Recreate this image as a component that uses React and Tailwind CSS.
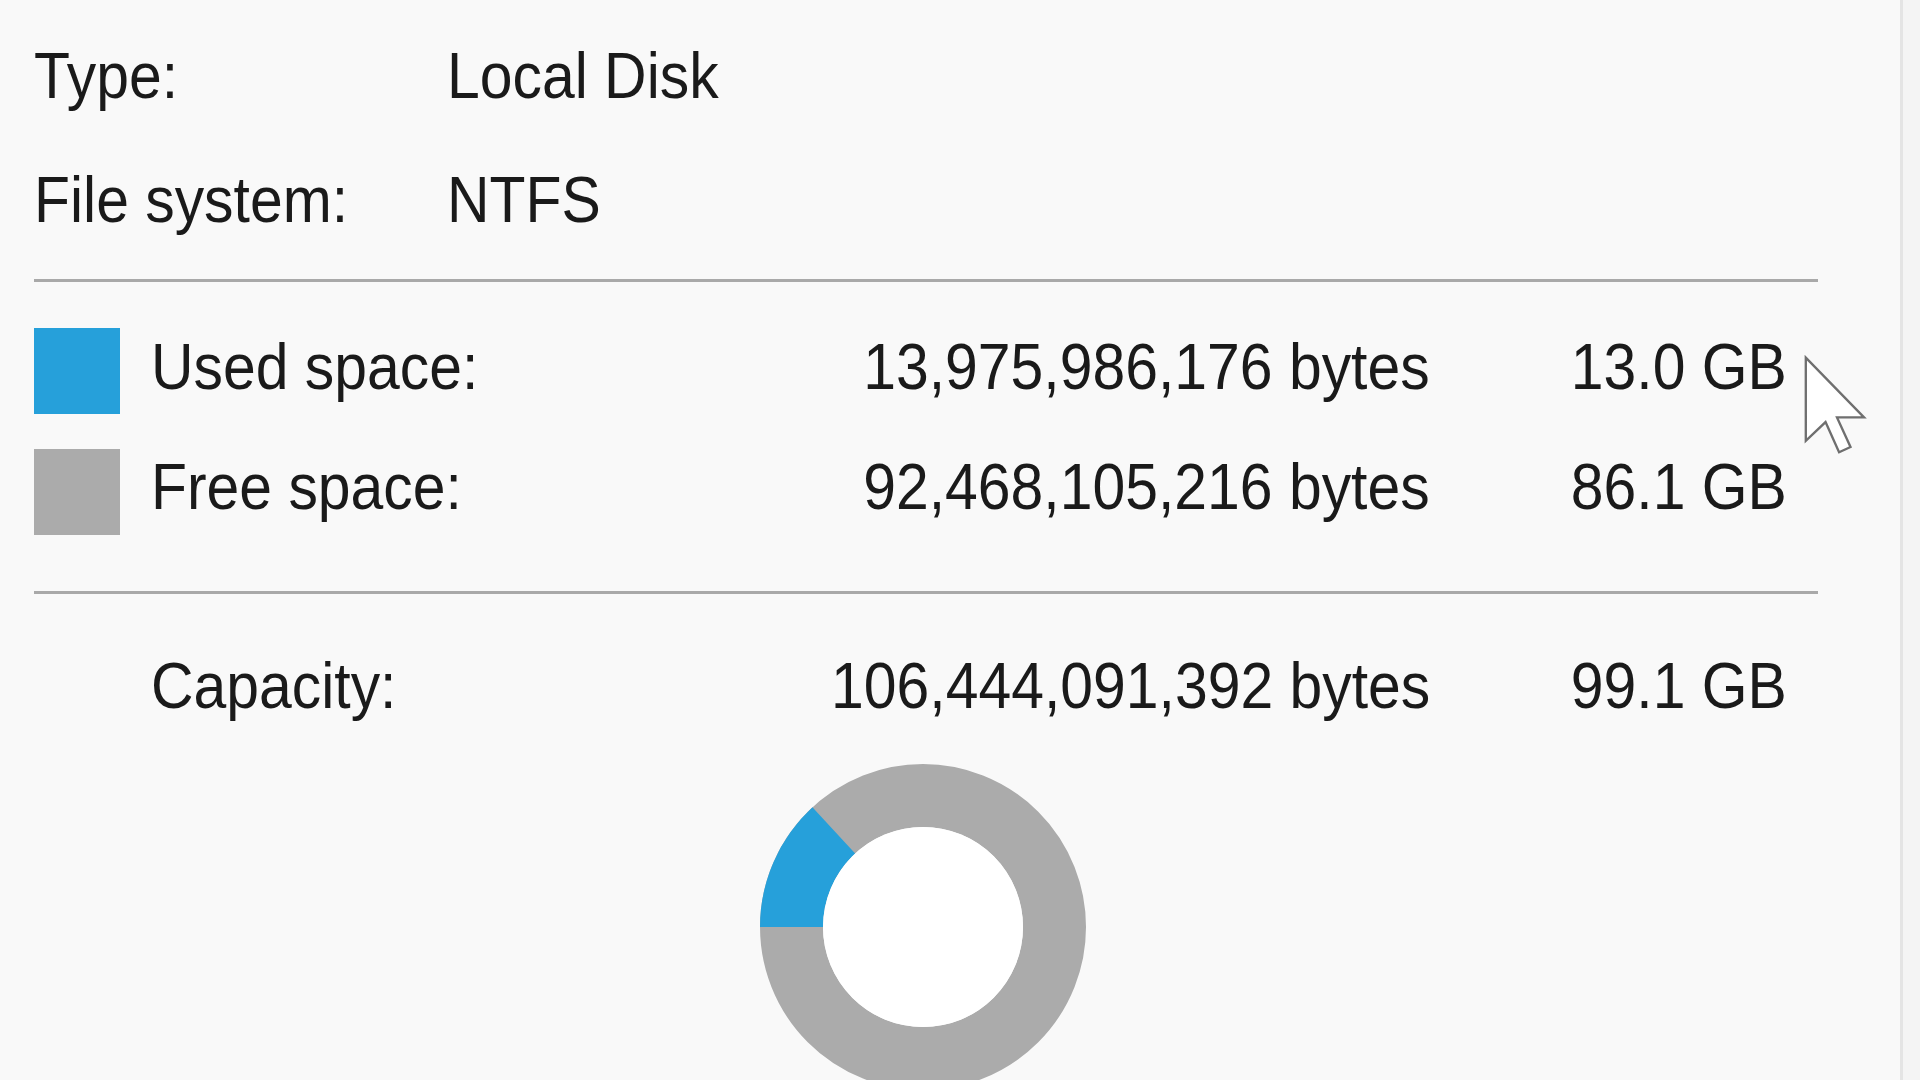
import React from "react";

function T({ children, right }) {
  return (
    <span
      className={`inline-block whitespace-nowrap scale-x-[0.92] ${right ? "origin-right" : "origin-left"}`}
    >
      {children}
    </span>
  );
}

function Row({ swatch, label, bytes, gb, textTop }) {
  return (
    <div className="flex items-start h-[86px] shrink-0">
      {swatch ? (
        <div className={`w-[86px] h-[86px] shrink-0 ${swatch}`} />
      ) : (
        <div className="w-[86px] h-[86px] shrink-0" />
      )}
      <div className={`ml-[31px] w-[1279px] flex justify-between h-[64px] leading-none ${textTop}`}>
        <T>{label}</T>
        <T right>{bytes}</T>
      </div>
      <div className={`w-[357px] text-right h-[64px] leading-none ${textTop}`}>
        <T right>{gb}</T>
      </div>
    </div>
  );
}

export default function App() {
  const r = 131.5;
  const c = 2 * Math.PI * r;
  const used = 13975986176 / 106444091392;
  return (
    <div
      className="relative w-full h-[1080px] overflow-hidden flex bg-[#f9f9f9] text-[#1a1a1a] text-[64px]"
      style={{ fontFamily: '"Liberation Sans", Arial, sans-serif' }}
    >
      <div className="w-[1900px] shrink-0 pl-[34px] flex flex-col">
        <div className="mt-[44px] h-[64px] shrink-0 flex leading-none">
          <span className="w-[413px]"><T>Type:</T></span>
          <T>Local Disk</T>
        </div>
        <div className="mt-[60px] h-[64px] shrink-0 flex leading-none">
          <span className="w-[413px]"><T>File system:</T></span>
          <T>NTFS</T>
        </div>
        <div className="mt-[47px] w-[1784px] h-[3px] shrink-0 bg-[#a9a9a9]" />
        <div className="mt-[46px] shrink-0">
          <Row swatch="bg-[#26a0da]" label="Used space:" bytes="13,975,986,176 bytes" gb="13.0 GB" textTop="mt-[7px]" />
        </div>
        <div className="mt-[35px] shrink-0">
          <Row swatch="bg-[#ababab]" label="Free space:" bytes="92,468,105,216 bytes" gb="86.1 GB" textTop="mt-[6px]" />
        </div>
        <div className="mt-[56px] w-[1784px] h-[3px] shrink-0 bg-[#a9a9a9]" />
        <div className="mt-[53px] shrink-0">
          <Row label="Capacity:" bytes="106,444,091,392 bytes" gb="99.1 GB" textTop="mt-[7px]" />
        </div>
        <div className="mt-[31px] ml-[726px] shrink-0">
          <svg width="326" height="326" viewBox="0 0 326 326" className="block">
            <circle cx="163" cy="163" r={r} fill="none" stroke="#ababab" strokeWidth="63" />
            <circle
              cx="163"
              cy="163"
              r={r}
              fill="none"
              stroke="#26a0da"
              strokeWidth="63"
              strokeDasharray={`${used * c} ${c}`}
              transform="rotate(180 163 163)"
            />
            <circle cx="163" cy="163" r="100" fill="#ffffff" />
          </svg>
        </div>
      </div>
      <div className="flex-1 bg-[#f4f4f4] border-l-[3px] border-[#e4e4e4]" />
      <svg
        className="absolute left-[1803px] top-[355px]"
        width="68"
        height="104"
        viewBox="-0.5 -0.5 13 20"
      >
        <path
          d="M0 0 L0 16 L3.8 12.4 L6.4 18.2 L8.6 17.2 L6 11.5 L11.2 11.5 Z"
          fill="#ffffff"
          stroke="#6f6f6f"
          strokeWidth="0.45"
          strokeLinejoin="miter"
        />
      </svg>
    </div>
  );
}
